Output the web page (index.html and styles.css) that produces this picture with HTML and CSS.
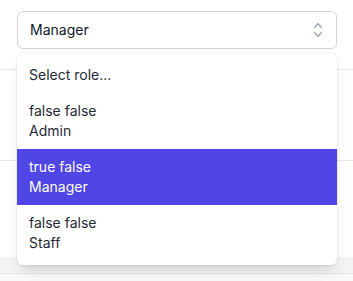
FILE: index.html
```html
<!DOCTYPE html>
<html lang="en">
<head>
    <meta charset="UTF-8">
    <meta name="viewport" content="width=device-width, initial-scale=1.0">
    <title>Role Select</title>
    <link rel="stylesheet" href="styles.css">
</head>
<body>
    <div class="field">
        <button class="select-button" type="button">
            <span class="select-value">Manager</span>
            <svg class="select-icon" viewBox="0 0 20 20" fill="currentColor" aria-hidden="true">
                <path fill-rule="evenodd" d="M10 3a.75.75 0 01.55.24l3.25 3.5a.75.75 0 11-1.1 1.02L10 4.852 7.3 7.76a.75.75 0 01-1.1-1.02l3.25-3.5A.75.75 0 0110 3zm-3.76 9.2a.75.75 0 011.06.04l2.7 2.908 2.7-2.908a.75.75 0 111.1 1.02l-3.25 3.5a.75.75 0 01-1.1 0l-3.25-3.5a.75.75 0 01.04-1.06z" clip-rule="evenodd"/>
            </svg>
        </button>
        <ul class="options">
            <li class="option">Select role...</li>
            <li class="option">false false<br>Admin</li>
            <li class="option active">true false<br>Manager</li>
            <li class="option">false false<br>Staff</li>
        </ul>
    </div>

    <div class="table">
        <div class="row row-first"></div>
        <div class="row row-second"></div>
        <div class="band"></div>
        <div class="rest"></div>
    </div>
</body>
</html>
```

FILE: styles.css
```css
body {
    margin: 0;
    font-family: Inter, "Noto Sans", sans-serif;
    background-color: #fff;
    color: #1f2937;
}
.field {
    position: relative;
    padding: 11px 16px 0 17px;
}
.select-button {
    display: flex;
    align-items: center;
    justify-content: space-between;
    width: 100%;
    height: 38px;
    padding: 0 8px 0 12px;
    background-color: #fff;
    border: 1px solid #d1d5db;
    border-radius: 6px;
    font-family: inherit;
    font-size: 14px;
    color: #111827;
    box-sizing: border-box;
}
.select-value {
    line-height: 20px;
}
.select-icon {
    width: 20px;
    height: 20px;
    color: #9ca3af;
}
.options {
    position: absolute;
    top: 53px;
    left: 17px;
    right: 16px;
    z-index: 10;
    margin: 0;
    padding: 4px 0;
    list-style: none;
    background-color: #fff;
    border-radius: 6px;
    box-shadow: 0 10px 15px -3px rgba(0, 0, 0, 0.1), 0 4px 6px -4px rgba(0, 0, 0, 0.1), 0 0 0 1px rgba(0, 0, 0, 0.04);
}
.option {
    padding: 8px 12px;
    font-size: 14px;
    line-height: 20px;
    color: #1f2937;
}
.option.active {
    background-color: #4f46e5;
    color: #fff;
}
.table {
    margin-top: 20px;
}
.row {
    border-top: 1px solid #e5e7eb;
}
.row-first {
    height: 90px;
}
.row-second {
    height: 96px;
}
.band {
    height: 16px;
    background-color: #f3f4f6;
    border-bottom: 1px solid #e5e7eb;
}
.rest {
    height: 20px;
    background-color: #f9fafb;
}
```
